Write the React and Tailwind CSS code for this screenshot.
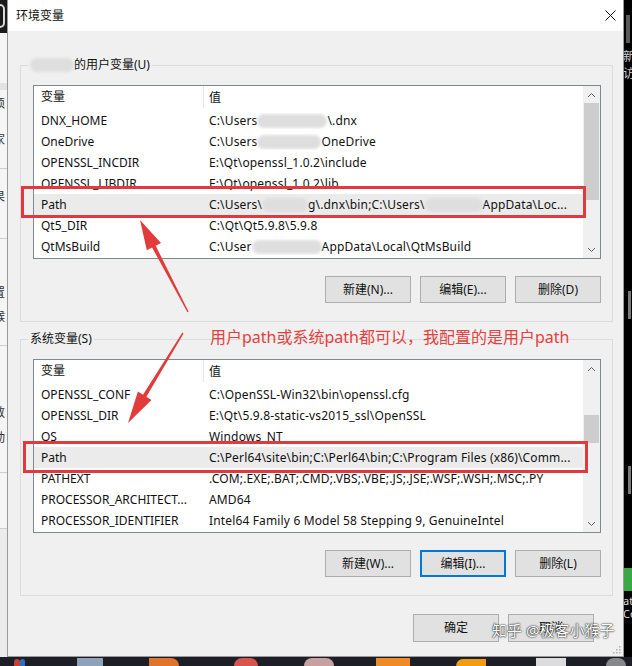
import React from "react";

const F = "font-['Noto_Sans','Noto_Sans_CJK_SC',sans-serif]";

function Blob({ cls }) {
  return (
    <span
      className={`inline-block h-[14px] align-[-3px] rounded-[7px] bg-[#dedede] blur-[1.5px] ${cls}`}
    />
  );
}

function Chevron({ up }) {
  return (
    <svg width="9" height="6" viewBox="0 0 9 6">
      <path
        d={up ? "M1 5 L4.5 1.5 L8 5" : "M1 1 L4.5 4.5 L8 1"}
        stroke="#606060"
        strokeWidth="1"
        fill="none"
      />
    </svg>
  );
}

function Scrollbar({ thumb }) {
  return (
    <div className="flex w-[17px] shrink-0 flex-col bg-[#f0f0f0]">
      <div className="flex h-[17px] items-center justify-center">
        <Chevron up />
      </div>
      <div className="flex-1 px-[1px]">
        <div className={thumb} />
      </div>
      <div className="flex h-[17px] items-center justify-center">
        <Chevron />
      </div>
    </div>
  );
}

function Row({ name, value, selected }) {
  return (
    <div
      className={`flex h-[21px] items-center leading-[16px] ${
        selected ? "bg-[#ebebeb]" : ""
      }`}
    >
      <div className="w-[170px] shrink-0 overflow-hidden whitespace-nowrap pl-[7px]">
        {name}
      </div>
      <div className="min-w-0 flex-1 overflow-hidden whitespace-nowrap pl-[5px] tracking-[0.15px]">
        {value}
      </div>
    </div>
  );
}

function ListTable({ rows, thumb }) {
  return (
    <div className="flex h-[174px] w-[568px] border border-[#828790] bg-white text-[12px] text-[#111]">
      <div className="flex min-w-0 flex-1 flex-col">
        <div className="flex h-[24px] items-center leading-[16px]">
          <div className="flex h-[22px] w-[170px] shrink-0 items-center self-start border-r border-[#e5e5e5] pl-[7px]">
            变量
          </div>
          <div className="pl-[5px]">值</div>
        </div>
        {rows.map((r, i) => (
          <Row key={i} name={r[0]} value={r[1]} selected={r[2]} />
        ))}
      </div>
      <Scrollbar thumb={thumb} />
    </div>
  );
}

function Btn({ children, focused }) {
  return (
    <div
      className={`flex h-[27px] w-[86px] items-center justify-center bg-[#e1e1e1] text-[12px] text-[#111] ${
        focused ? "border-2 border-[#0078d7]" : "border border-[#adadad]"
      }`}
    >
      {children}
    </div>
  );
}

function Group({ label, rows, thumb, buttons }) {
  return (
    <div className="relative w-[593px] border border-[#dcdcdc] pb-[18px] pl-[12px] pr-[11px] pt-[19px]">
      <span className="absolute -top-[9px] left-[7px] bg-[#f0f0f0] px-[2px] text-[12px] leading-[16px] text-[#111]">
        {label}
      </span>
      <ListTable rows={rows} thumb={thumb} />
      <div className="mt-[17px] flex justify-end gap-[9px]">
        {buttons.map((b, i) => (
          <Btn key={i} focused={b[1]}>
            {b[0]}
          </Btn>
        ))}
      </div>
    </div>
  );
}

const userRows = [
  ["DNX_HOME", <>C:\Users<Blob cls="w-[70px]" />\.dnx</>],
  ["OneDrive", <>C:\Users<Blob cls="w-[64px]" />OneDrive</>],
  ["OPENSSL_INCDIR", String.raw`E:\Qt\openssl_1.0.2\include`],
  ["OPENSSL_LIBDIR", String.raw`E:\Qt\openssl_1.0.2\lib`],
  [
    "Path",
    <>
      C:\Users\<Blob cls="w-[46px]" />g\.dnx\bin;C:\Users\<Blob cls="w-[58px]" />AppData\Loc...
    </>,
    true,
  ],
  ["Qt5_DIR", String.raw`C:\Qt\Qt5.9.8\5.9.8`],
  ["QtMsBuild", <>C:\User<Blob cls="w-[70px]" />AppData\Local\QtMsBuild</>],
];

const sysRows = [
  ["OPENSSL_CONF", String.raw`C:\OpenSSL-Win32\bin\openssl.cfg`],
  ["OPENSSL_DIR", String.raw`E:\Qt\5.9.8-static-vs2015_ssl\OpenSSL`],
  ["OS", "Windows_NT"],
  [
    "Path",
    String.raw`C:\Perl64\site\bin;C:\Perl64\bin;C:\Program Files (x86)\Comm...`,
    true,
  ],
  ["PATHEXT", ".COM;.EXE;.BAT;.CMD;.VBS;.VBE;.JS;.JSE;.WSF;.WSH;.MSC;.PY"],
  ["PROCESSOR_ARCHITECT...", "AMD64"],
  ["PROCESSOR_IDENTIFIER", "Intel64 Family 6 Model 58 Stepping 9, GenuineIntel"],
];

function Frag({ h, ch, line, bg }) {
  return (
    <div
      className={`flex shrink-0 items-center overflow-hidden ${h} ${line ? "bg-[#cfcfcf]" : bg || ""}`}
    >
      {ch && <span className="-ml-[7px] text-[12px] leading-[16px] text-[#333]">{ch}</span>}
    </div>
  );
}

function LeftStrip() {
  return (
    <div className="flex w-[7px] shrink-0 flex-col overflow-hidden bg-[#f5f5f5]">
      <div className="h-[33px] shrink-0 bg-[#1b1b1b] pt-[4px]">
        <div className="-ml-[6px] h-[24px] w-[11px] rounded-[5px] border-2 border-[#d8d8d8]" />
      </div>
      <Frag h="h-[50px]" />
      <Frag h="h-[7px]" bg="bg-[#e3e3e3]" />
      <Frag h="h-[5px]" />
      <Frag h="h-[18px]" ch="硕" />
      <Frag h="h-[18px]" />
      <Frag h="h-[18px]" ch="家" />
      <Frag h="h-[19px]" />
      <Frag h="h-[1px]" line />
      <Frag h="h-[19px]" />
      <Frag h="h-[18px]" ch="果" />
      <Frag h="h-[32px]" />
      <Frag h="h-[1px]" line />
      <Frag h="h-[45px]" />
      <Frag h="h-[18px]" ch="置" />
      <Frag h="h-[6px]" />
      <Frag h="h-[18px]" ch="喉" />
      <Frag h="h-[19px]" />
      <Frag h="h-[1px]" line />
      <Frag h="h-[58px]" />
      <Frag h="h-[18px]" ch="数" />
      <Frag h="h-[7px]" />
      <Frag h="h-[18px]" ch="动" />
      <Frag h="h-[25px]" />
      <Frag h="h-[1px]" line />
      <Frag h="h-[55px]" />
      <Frag h="h-[1px]" line />
      <div className="flex-1 bg-[#ececec]" />
    </div>
  );
}

function RightStrip() {
  return (
    <div className="flex w-[8px] shrink-0 flex-col overflow-hidden bg-black">
      <div className="h-[15px] shrink-0" />
      <div className="ml-[2px] h-[28px] w-[4px] shrink-0 bg-[#5a5a5a]" />
      <div className="h-[6px] shrink-0" />
      <div className="flex h-[16px] shrink-0 items-center">
        <span className="-ml-[1px] text-[12px] leading-[16px] text-[#cfcfcf]">新</span>
      </div>
      <div className="flex h-[18px] shrink-0 items-center">
        <span className="-ml-[1px] text-[12px] leading-[16px] text-[#cfcfcf]">访</span>
      </div>
      <div className="h-[208px] shrink-0" />
      <div className="ml-[4px] h-[28px] w-[3px] shrink-0 bg-[#7a7a7a]" />
      <div className="h-[147px] shrink-0" />
      <div className="ml-[4px] h-[28px] w-[3px] shrink-0 bg-[#7a7a7a]" />
      <div className="h-[74px] shrink-0" />
      <div className="h-[23px] shrink-0 bg-[#3aa845]" />
      <div className="h-[3px] shrink-0" />
      <div className="flex h-[13px] shrink-0 items-center">
        <span className="-ml-[1px] text-[11px] leading-[13px] text-[#ddd]">at</span>
      </div>
      <div className="flex h-[13px] shrink-0 items-center">
        <span className="-ml-[1px] text-[11px] leading-[13px] text-[#ddd]">Co</span>
      </div>
    </div>
  );
}

function Taskbar() {
  return (
    <div className="flex h-[9px] w-full items-end overflow-hidden bg-[#1c1f26]">
      <div className="ml-[14px] h-[7px] w-[6px] rounded-t-full bg-[#c8402f]" />
      <div className="h-[7px] w-[5px] rounded-t-full bg-[#2f6fc2]" />
      <div className="ml-[52px] h-[8px] w-[26px] bg-[#8fa3b8]" />
      <div className="ml-[46px] h-[8px] w-[30px] rounded-tr-[10px] bg-[#e2732a]" />
      <div className="ml-[55px] h-[8px] w-[24px] rounded-t-full bg-[#d9534f]" />
      <div className="ml-[46px] h-[8px] w-[30px] rounded-t-full bg-[#c9a0a0]" />
      <div className="ml-[42px] h-[8px] w-[34px] bg-[#f08a24]" />
      <div className="ml-[46px] h-[7px] w-[30px] rounded-tl-[8px] bg-[#f39c12]" />
      <div className="ml-[50px] h-[8px] w-[30px] bg-[#dcdcdc]" />
      <div className="ml-[40px] h-[8px] w-[20px] rounded-t-full bg-[#888]" />
    </div>
  );
}

export default function App() {
  return (
    <div className={`relative h-[666px] w-[632px] overflow-hidden bg-black ${F}`}>
      <div className="flex h-[657px]">
        <LeftStrip />
        <div className="relative flex w-[617px] shrink-0 flex-col border-x border-b border-[#9a9a9a] bg-[#f0f0f0]">
          <div className="flex h-[31px] shrink-0 items-center justify-between bg-white pl-[8px] pr-[7px]">
            <span className="text-[12px] leading-[16px] text-[#111]">环境变量</span>
            <svg width="11" height="11" viewBox="0 0 11 11">
              <path d="M0.5 0.5 L10.5 10.5 M10.5 0.5 L0.5 10.5" stroke="#111" strokeWidth="1" />
            </svg>
          </div>
          <div className="flex flex-1 flex-col px-[12px] pt-[34px]">
            <Group
              label={
                <>
                  <Blob cls="w-[44px]" />
                  的用户变量(U)
                </>
              }
              rows={userRows}
              thumb="h-[97px] bg-[#cdcdcd]"
              buttons={[
                ["新建(N)...", false],
                ["编辑(E)...", false],
                ["删除(D)", false],
              ]}
            />
            <div className="mt-[17px]">
              <Group
                label="系统变量(S)"
                rows={sysRows}
                thumb="mt-[38px] h-[28px] bg-[#cdcdcd]"
                buttons={[
                  ["新建(W)...", false],
                  ["编辑(I)...", true],
                  ["删除(L)", false],
                ]}
              />
            </div>
            <div className="mt-[18px] flex justify-end gap-[9px] pr-[17px]">
              <div className="flex h-[28px] w-[86px] items-center justify-center border border-[#adadad] bg-[#e1e1e1] text-[12px] text-[#111]">
                确定
              </div>
              <div className="flex h-[28px] w-[86px] items-center justify-center border border-[#adadad] bg-[#e1e1e1] text-[12px] text-[#111]">
                取消
              </div>
            </div>
          </div>
          <svg className="absolute bottom-[2px] right-[2px]" width="8" height="8" viewBox="0 0 8 8">
            <rect x="6" y="0" width="1.5" height="1.5" fill="#b0b0b0" />
            <rect x="3" y="3" width="1.5" height="1.5" fill="#b0b0b0" />
            <rect x="6" y="3" width="1.5" height="1.5" fill="#b0b0b0" />
            <rect x="0" y="6" width="1.5" height="1.5" fill="#b0b0b0" />
            <rect x="3" y="6" width="1.5" height="1.5" fill="#b0b0b0" />
            <rect x="6" y="6" width="1.5" height="1.5" fill="#b0b0b0" />
          </svg>
        </div>
        <RightStrip />
      </div>
      <Taskbar />

      {/* annotations */}
      <div className="pointer-events-none absolute left-[21px] top-[186px] h-[32px] w-[565px] border-[3px] border-[#e0393e]" />
      <div className="pointer-events-none absolute left-[23px] top-[441px] h-[32px] w-[565px] border-[3px] border-[#e0393e]" />
      <div className="pointer-events-none absolute left-[210px] top-[327px] whitespace-nowrap text-[16px] leading-[20px] text-[#e3403f]">
        用户path或系统path都可以，我配置的是用户path
      </div>
      <svg className="pointer-events-none absolute left-0 top-0" width="632" height="666" viewBox="0 0 632 666">
        <polygon
          points="140,220 161,242.9 155.7,245.7 188.6,311.7 187.4,312.3 152.1,247.5 146.8,250.3"
          fill="#e23b3b"
        />
        <polygon
          points="128,423 151.5,399.9 146.4,396.7 183.6,333.4 182.4,332.6 143,394.7 137.9,391.5"
          fill="#e23b3b"
        />
      </svg>
      <div className="pointer-events-none absolute left-[492px] top-[620px] whitespace-nowrap text-[15px] leading-[20px] text-white [text-shadow:0_0_2px_rgba(0,0,0,0.9),0_0_1px_rgba(0,0,0,0.9)]">
        知乎 @极客小猴子
      </div>
    </div>
  );
}
